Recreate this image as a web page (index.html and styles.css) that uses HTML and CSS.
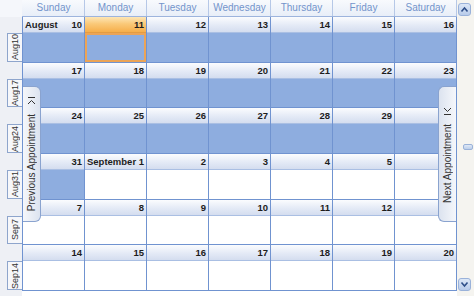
FILE: index.html
```html
<!DOCTYPE html>
<html>
<head>
<meta charset="utf-8">
<link rel="stylesheet" href="styles.css">
</head>
<body>
<div class="app">
  <div class="main">
    <div class="corner"></div>
    <div class="dayheads">
      <div class="dh">Sunday</div><div class="dh">Monday</div><div class="dh">Tuesday</div><div class="dh">Wednesday</div><div class="dh">Thursday</div><div class="dh">Friday</div><div class="dh">Saturday</div>
    </div>

    <div class="wl"><div class="wlbox"><span>Aug10</span></div></div>
    <div class="week">
      <div class="day"><div class="date"><span>August</span><span>10</span></div><div class="slot"></div></div>
      <div class="day"><div class="date today"><span>11</span></div><div class="slot sel"></div></div>
      <div class="day"><div class="date"><span>12</span></div><div class="slot"></div></div>
      <div class="day"><div class="date"><span>13</span></div><div class="slot"></div></div>
      <div class="day"><div class="date"><span>14</span></div><div class="slot"></div></div>
      <div class="day"><div class="date"><span>15</span></div><div class="slot"></div></div>
      <div class="day"><div class="date"><span>16</span></div><div class="slot"></div></div>
    </div>

    <div class="wl"><div class="wlbox"><span>Aug17</span></div></div>
    <div class="week">
      <div class="day"><div class="date"><span>17</span></div><div class="slot"></div></div>
      <div class="day"><div class="date"><span>18</span></div><div class="slot"></div></div>
      <div class="day"><div class="date"><span>19</span></div><div class="slot"></div></div>
      <div class="day"><div class="date"><span>20</span></div><div class="slot"></div></div>
      <div class="day"><div class="date"><span>21</span></div><div class="slot"></div></div>
      <div class="day"><div class="date"><span>22</span></div><div class="slot"></div></div>
      <div class="day"><div class="date"><span>23</span></div><div class="slot"></div></div>
    </div>

    <div class="wl"><div class="wlbox"><span>Aug24</span></div></div>
    <div class="week">
      <div class="day"><div class="date"><span>24</span></div><div class="slot"></div></div>
      <div class="day"><div class="date"><span>25</span></div><div class="slot"></div></div>
      <div class="day"><div class="date"><span>26</span></div><div class="slot"></div></div>
      <div class="day"><div class="date"><span>27</span></div><div class="slot"></div></div>
      <div class="day"><div class="date"><span>28</span></div><div class="slot"></div></div>
      <div class="day"><div class="date"><span>29</span></div><div class="slot"></div></div>
      <div class="day"><div class="date"><span>30</span></div><div class="slot"></div></div>
    </div>

    <div class="wl"><div class="wlbox"><span>Aug31</span></div></div>
    <div class="week">
      <div class="day"><div class="date"><span>31</span></div><div class="slot"></div></div>
      <div class="day"><div class="date"><span>September</span><span>1</span></div><div class="slot white"></div></div>
      <div class="day"><div class="date"><span>2</span></div><div class="slot white"></div></div>
      <div class="day"><div class="date"><span>3</span></div><div class="slot white"></div></div>
      <div class="day"><div class="date"><span>4</span></div><div class="slot white"></div></div>
      <div class="day"><div class="date"><span>5</span></div><div class="slot white"></div></div>
      <div class="day"><div class="date"><span>6</span></div><div class="slot white"></div></div>
    </div>

    <div class="wl"><div class="wlbox"><span>Sep7</span></div></div>
    <div class="week">
      <div class="day"><div class="date"><span>7</span></div><div class="slot white"></div></div>
      <div class="day"><div class="date"><span>8</span></div><div class="slot white"></div></div>
      <div class="day"><div class="date"><span>9</span></div><div class="slot white"></div></div>
      <div class="day"><div class="date"><span>10</span></div><div class="slot white"></div></div>
      <div class="day"><div class="date"><span>11</span></div><div class="slot white"></div></div>
      <div class="day"><div class="date"><span>12</span></div><div class="slot white"></div></div>
      <div class="day"><div class="date"><span>13</span></div><div class="slot white"></div></div>
    </div>

    <div class="wl"><div class="wlbox"><span>Sep14</span></div></div>
    <div class="week">
      <div class="day"><div class="date"><span>14</span></div><div class="slot white"></div></div>
      <div class="day"><div class="date"><span>15</span></div><div class="slot white"></div></div>
      <div class="day"><div class="date"><span>16</span></div><div class="slot white"></div></div>
      <div class="day"><div class="date"><span>17</span></div><div class="slot white"></div></div>
      <div class="day"><div class="date"><span>18</span></div><div class="slot white"></div></div>
      <div class="day"><div class="date"><span>19</span></div><div class="slot white"></div></div>
      <div class="day"><div class="date"><span>20</span></div><div class="slot white"></div></div>
    </div>

    <div class="filler"></div>
    <div class="filler2"></div>

    <div class="tab prev">
      <svg class="ticon" width="9" height="10" viewBox="0 0 9 10"><path d="M1 1.5H8M1 8L4.5 4.5L8 8" fill="none" stroke="#333" stroke-width="1"/></svg>
      <span class="tabtext">Previous Appointment</span>
    </div>
    <div class="tab next">
      <svg class="ticon" width="9" height="10" viewBox="0 0 9 10"><path d="M1 2L4.5 5.5L8 2M1 8.5H8" fill="none" stroke="#333" stroke-width="1"/></svg>
      <span class="tabtext">Next Appointment</span>
    </div>
  </div>

  <div class="vbar">
    <div class="arrowbox"><svg width="9" height="7" viewBox="0 0 9 7"><path d="M1.5 5.5L4.5 2L7.5 5.5" fill="none" stroke="#2f4f8a" stroke-width="1.6"/></svg></div>
    <div class="grip"></div>
    <div class="arrowbox"><svg width="9" height="7" viewBox="0 0 9 7"><path d="M1.5 1.5L4.5 5L7.5 1.5" fill="none" stroke="#2f4f8a" stroke-width="1.6"/></svg></div>
  </div>
</div>
</body>
</html>
```

FILE: styles.css
```css
* { box-sizing: border-box; }
body {
  margin: 0;
  width: 474px;
  height: 296px;
  overflow: hidden;
  background: #fff;
  font-family: "Liberation Sans", Arial, sans-serif;
}
.app {
  display: grid;
  grid-template-columns: 457px 17px;
  width: 474px;
  height: 296px;
}
.main {
  position: relative;
  display: grid;
  grid-template-columns: 22px 435px;
  grid-template-rows: 17px repeat(6, 1fr) 5px;
  height: 296px;
  background: #eef0f5;
}
.corner { background: #f5f7fb; }
.dayheads {
  display: grid;
  grid-template-columns: repeat(7, 62px);
  padding-left: 1px;
  background: linear-gradient(#f8fafd, #e8eef8);
  border-bottom: 1px solid #9db4dd;
}
.dh {
  border-right: 1px solid #b6c8e7;
  color: #7394cb;
  font-size: 10px;
  line-height: 16px;
  text-align: center;
}
.week {
  display: grid;
  grid-template-columns: repeat(7, 62px);
  border-left: 1px solid #7093d0;
  border-bottom: 1px solid #7093d0;
  min-height: 0;
}
.day {
  display: flex;
  flex-direction: column;
  border-right: 1px solid #7093d0;
  min-height: 0;
}
.date {
  flex: none;
  height: 16px;
  display: flex;
  justify-content: space-between;
  padding: 0 2px;
  background: linear-gradient(#fbfcfe, #e4eaf6 55%, #d4ddef);
  border-bottom: 1px solid #aabfe3;
  font-size: 9.5px;
  font-weight: bold;
  line-height: 16px;
  color: #1d1d1d;
}
.date span:last-child { margin-left: auto; }
.date.today {
  background: linear-gradient(#fde6b6, #fac979 45%, #f6ae4a);
  border-bottom-color: #e39c42;
}
.slot {
  flex: 1;
  background: #8eaddf;
}
.slot.white { background: #fff; }
.slot.sel { box-shadow: inset 0 0 0 2px #eba457; }
.wl {
  display: flex;
  flex-direction: column;
  padding: 16px 0 1px 7px;
  min-height: 0;
}
.wlbox {
  flex: 1;
  display: flex;
  align-items: center;
  justify-content: center;
  overflow: hidden;
  background: #f6f7fa;
  border: 1px solid #8ea5cc;
  border-right: none;
}
.wlbox span {
  writing-mode: vertical-rl;
  transform: rotate(180deg);
  font-size: 9px;
  color: #333;
  white-space: nowrap;
}
.filler { background: #eef0f5; }
.filler2 { background: #fff; }
.tab {
  position: absolute;
  top: 86px;
  width: 18px;
  height: 136px;
  display: flex;
  flex-direction: column;
  align-items: center;
  justify-content: center;
  gap: 8px;
  background: linear-gradient(to right, #f5f7fb, #dce3ef);
  border: 1px solid #8aa3cf;
  font-size: 10px;
  color: #333;
}
.ticon { flex: none; display: block; }
.tab.prev {
  left: 23px;
  border-left: none;
  border-radius: 0 6px 6px 0;
}
.tab.next {
  left: 438px;
  border-right: none;
  border-radius: 6px 0 0 6px;
  background: linear-gradient(to left, #f5f7fb, #dce3ef);
}
.tabtext {
  writing-mode: vertical-rl;
  transform: rotate(180deg);
  white-space: nowrap;
}
.vbar {
  height: 296px;
  background: #f5f4f0;
  display: flex;
  flex-direction: column;
  justify-content: space-between;
  align-items: flex-start;
  padding: 3px 0 5px 1px;
}
.arrowbox {
  width: 13px;
  height: 13px;
  border-radius: 3px;
  background: linear-gradient(#dce7f7, #b8cbea);
  border: 1px solid #9ab2da;
  display: flex;
  align-items: center;
  justify-content: center;
}
.arrowbox svg { display: block; }
.grip {
  width: 10px;
  height: 6px;
  margin-left: 5px;
  border-radius: 2px;
  background: linear-gradient(#dfe8f6, #bccfeb);
  border: 1px solid #9ab2d9;
}
```
